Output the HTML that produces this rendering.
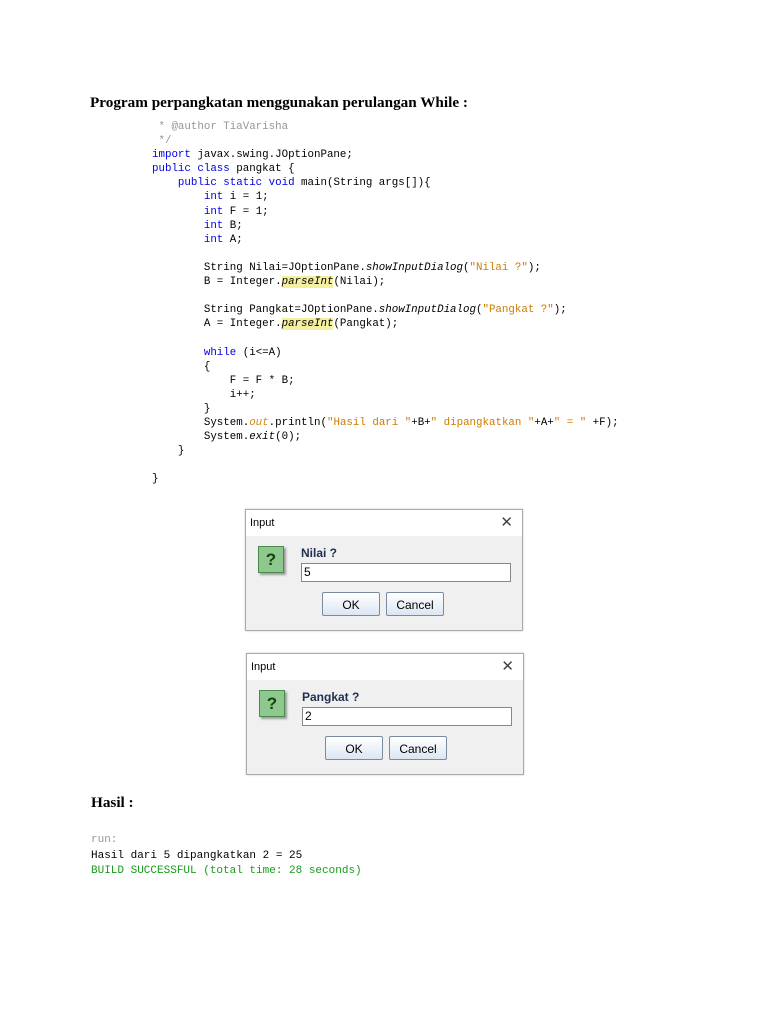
<!DOCTYPE html>
<html><head><style>
body{margin:0;width:768px;height:1024px;background:#fff;position:relative;overflow:hidden;font-family:"Liberation Serif",serif}
.t{position:absolute;font-weight:bold;font-size:15.2px;color:#000;white-space:nowrap}
pre{margin:0;position:absolute;font-family:"Liberation Mono",monospace;font-size:10.8px;line-height:14.1px;color:#000}
.k{color:#0000e6}.c{color:#969696}.s{color:#ce7b00}.i{font-style:italic}.h{background:#f5f0a0}.o{color:#d48a1a;font-style:italic}
.dlg{position:absolute;width:276px;height:120px;border:1px solid #aaa;background:#f0f0f0;font-family:"Liberation Sans",sans-serif;box-shadow:0 0 2px #ccc}
.tb{height:26px;background:#fff;font-size:11px;line-height:26px;padding-left:4px;position:relative}
.x{position:absolute;right:9px;top:0;font-size:15px;color:#444;font-weight:100}
.ic{position:absolute;left:12px;top:36px;width:24px;height:25px;background:#8ec88e;border:1px solid #4a8a4a;color:#114411;font-weight:bold;font-size:17px;text-align:center;line-height:25px;box-shadow:2px 2px 2px #999}
.lb{position:absolute;left:55px;top:36px;font-size:12px;font-weight:bold;color:#1f2f4f}
.tf{position:absolute;left:55px;top:53px;background:#fff;border:1px solid #888;font-size:12px;line-height:17px;padding-left:2px;box-sizing:border-box;width:210px;height:19px}
.bt{position:absolute;top:82px;height:24px;border:1px solid #7a8aa0;border-radius:2px;background:linear-gradient(#fff,#dce6f2);font-size:12px;text-align:center;line-height:24px;color:#000;box-sizing:border-box}
</style></head><body>
<div class="t" style="left:90px;top:94px">Program perpangkatan menggunakan perulangan While :</div>
<pre style="left:152px;top:120px"><span class="c"> * @author TiaVarisha
 */</span>
<span class="k">import</span> javax.swing.JOptionPane;
<span class="k">public class</span> pangkat {
    <span class="k">public static void</span> main(String args[]){
        <span class="k">int</span> i = 1;
        <span class="k">int</span> F = 1;
        <span class="k">int</span> B;
        <span class="k">int</span> A;

        String Nilai=JOptionPane.<span class="i">showInputDialog</span>(<span class="s">"Nilai ?"</span>);
        B = Integer.<span class="i h">parseInt</span>(Nilai);

        String Pangkat=JOptionPane.<span class="i">showInputDialog</span>(<span class="s">"Pangkat ?"</span>);
        A = Integer.<span class="i h">parseInt</span>(Pangkat);

        <span class="k">while</span> (i&lt;=A)
        {
            F = F * B;
            i++;
        }
        System.<span class="o">out</span>.println(<span class="s">"Hasil dari "</span>+B+<span class="s">" dipangkatkan "</span>+A+<span class="s">" = "</span> +F);
        System.<span class="i">exit</span>(0);
    }

}</pre>
<div class="dlg" style="left:245px;top:509px">
<div class="tb">Input<span class="x">✕</span></div>
<div class="ic">?</div><div class="lb">Nilai ?</div><div class="tf">5</div>
<div class="bt" style="left:76px;width:58px">OK</div><div class="bt" style="left:140px;width:58px">Cancel</div>
</div>
<div class="dlg" style="left:246px;top:653px">
<div class="tb">Input<span class="x">✕</span></div>
<div class="ic">?</div><div class="lb">Pangkat ?</div><div class="tf">2</div>
<div class="bt" style="left:78px;width:58px">OK</div><div class="bt" style="left:142px;width:58px">Cancel</div>
</div>
<div class="t" style="left:91px;top:794px">Hasil :</div>
<pre style="left:91px;top:833px;line-height:15.5px;font-size:11px"><span class="c">run:</span>
Hasil dari 5 dipangkatkan 2 = 25
<span style="color:#1a9a1a">BUILD SUCCESSFUL (total time: 28 seconds)</span></pre>
</body></html>
